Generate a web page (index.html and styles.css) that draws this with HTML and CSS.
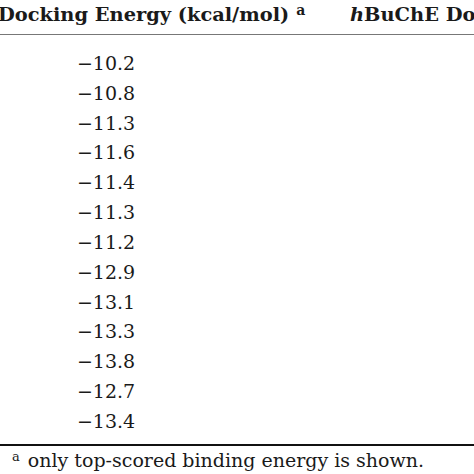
FILE: index.html
```html
<!DOCTYPE html>
<html>
<head>
<meta charset="utf-8">
<link rel="stylesheet" href="styles.css">
</head>
<body>
<div class="table">
  <div class="head">
    <div class="hcell first">Docking Energy (kcal/mol)<sup class="sup">a</sup></div>
    <div class="hcell second"><i>h</i>BuChE Docking Energy (kcal/mol)</div>
  </div>
  <div class="rows">
    <div class="row">−10.2</div>
    <div class="row">−10.8</div>
    <div class="row">−11.3</div>
    <div class="row">−11.6</div>
    <div class="row">−11.4</div>
    <div class="row">−11.3</div>
    <div class="row">−11.2</div>
    <div class="row">−12.9</div>
    <div class="row">−13.1</div>
    <div class="row">−13.3</div>
    <div class="row">−13.8</div>
    <div class="row">−12.7</div>
    <div class="row">−13.4</div>
  </div>
  <div class="foot"><sup class="fsup">a</sup> only top-scored binding energy is shown.</div>
</div>
</body>
</html>
```
FILE: styles.css
```css
html, body {
  margin: 0;
  padding: 0;
  background: #ffffff;
}
body {
  width: 474px;
  height: 474px;
  overflow: hidden;
  font-family: "DejaVu Serif", "Liberation Serif", serif;
  color: #1a1a1a;
  font-size: 19px;
}
.table {
  width: 474px;
}
.head {
  display: flex;
  height: 34px;
  border-bottom: 1px solid #777777;
  white-space: nowrap;
  overflow: hidden;
}
.hcell {
  font-weight: bold;
  font-size: 19.4px;
  line-height: 29px;
  flex: none;
}
.first {
  width: 352px;
  margin-left: -2px;
}
.sup {
  font-size: 14px;
  vertical-align: 6px;
  margin-left: 7px;
  line-height: 0;
}
.rows {
  padding-top: 14px;
}
.row {
  width: 212px;
  height: 29.83px;
  line-height: 29.83px;
  text-align: center;
}
.foot {
  margin-top: 7px;
  border-top: 2px solid #111111;
  padding-left: 12px;
  line-height: 28px;
  white-space: nowrap;
}
.fsup {
  font-size: 13px;
  vertical-align: 6px;
  line-height: 0;
  margin-right: 2px;
}
```
